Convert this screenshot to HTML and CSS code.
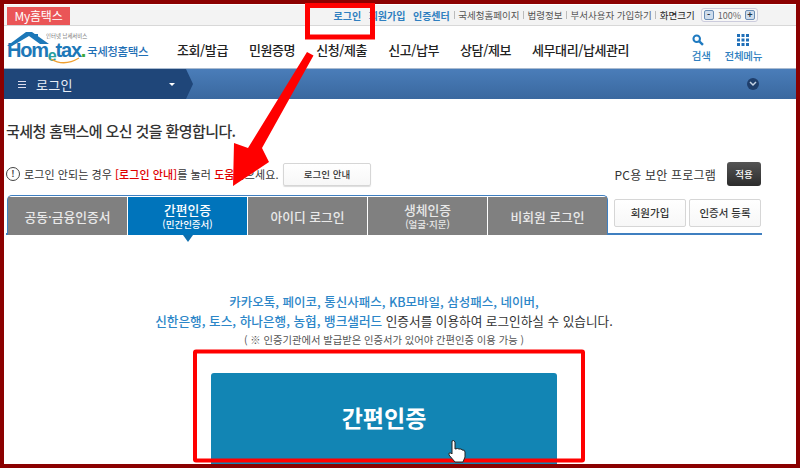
FILE: index.html
```html
<!DOCTYPE html>
<html lang="ko">
<head>
<meta charset="utf-8">
<title>국세청 홈택스</title>
<link rel="stylesheet" href="styles.css">
</head>
<body>
<div class="page">
  <div class="topbar">
    <span class="my">My홈택스</span>
    <div class="util">
      <a class="blue">로그인</a>
      <a class="blue">회원가입</a>
      <a class="blue last">인증센터</a>
      <i></i><a>국세청홈페이지</a>
      <i></i><a>법령정보</a>
      <i></i><a>부서사용자 가입하기</a>
      <i></i><a class="dark">화면크기</a>
      <span class="zoom"><b>-</b><em>100%</em><b>+</b></span>
    </div>
  </div>
  <header class="head">
    <div class="logo">
      <svg class="logo-house" width="44" height="16" viewBox="0 0 44 16"><path d="M0 15 L19 1 h6 L42 13 h-9 L22 5 L5 15 Z" fill="#1d78b8"/><rect x="27" y="3" width="4" height="5" fill="#1d78b8"/></svg>
      <span class="logo-sub">인터넷 납세서비스</span>
      <span class="logo-word">Hom<span class="logo-e">e</span>tax<span class="logo-dot">.</span></span>
      <svg class="logo-smile" width="30" height="8" viewBox="0 0 30 8"><path d="M1 2 Q14 10 29 1" stroke="#f0a030" stroke-width="1.3" fill="none"/></svg>
      <span class="logo-name">국세청홈택스</span>
    </div>
    <nav class="gnb">
      <a>조회/발급</a><a>민원증명</a><a>신청/제출</a><a>신고/납부</a><a>상담/제보</a><a>세무대리/납세관리</a>
    </nav>
    <div class="tools">
      <div class="tool tool-search">
        <svg class="search-ico" width="12" height="12" viewBox="0 0 14 14"><circle cx="5.5" cy="5.5" r="3.8" fill="none" stroke="#1f7ac0" stroke-width="2.4"/><path d="M8.5 8.5 L12.800 12.800" stroke="#1f7ac0" stroke-width="2.800"/></svg>
        <span>검색</span>
      </div>
      <div class="tool">
        <svg width="12" height="12" viewBox="0 0 12 12" fill="#1f6fb8"><rect width="3" height="3"/><rect x="4.5" width="3" height="3"/><rect x="9" width="3" height="3"/><rect y="4.5" width="3" height="3"/><rect x="4.5" y="4.5" width="3" height="3"/><rect x="9" y="4.5" width="3" height="3"/><rect y="9" width="3" height="3"/><rect x="4.5" y="9" width="3" height="3"/><rect x="9" y="9" width="3" height="3"/></svg>
        <span>전체메뉴</span>
      </div>
    </div>
  </header>
  <div class="crumb">
    <div class="crumb-cur">
      <span class="burger"></span>
      <span class="crumb-text">로그인</span>
      <span class="caret"></span>
    </div>
    <span class="crumb-arrow"></span>
    <span class="crumb-more"><svg width="8" height="6" viewBox="0 0 8 6"><path d="M1 1 L4 4 L7 1" fill="none" stroke="#c5d3e4" stroke-width="1.5"/></svg></span>
  </div>
  <main class="main">
    <h1 class="welcome">국세청 홈택스에 오신 것을 환영합니다.</h1>
    <div class="notice-row">
      <span class="info">!</span>
      <p class="notice">로그인 안되는 경우 <span class="red">[로그인 안내]</span>를 눌러 <span class="red">도움</span>받으세요.</p>
      <button class="btn guide">로그인 안내</button>
      <span class="pc">PC용 보안 프로그램</span>
      <button class="apply">적용</button>
    </div>
    <div class="tabrow">
      <div class="tabs">
        <div class="tab">공동·금융인증서</div>
        <div class="tab on">간편인증<small>(민간인증서)</small></div>
        <div class="tab">아이디 로그인</div>
        <div class="tab">생체인증<small>(얼굴·지문)</small></div>
        <div class="tab">비회원 로그인</div>
      </div>
      <div class="tab-btns">
        <button class="btn side">회원가입</button>
        <button class="btn side">인증서 등록</button>
      </div>
    </div>
    <div class="desc">
      <p class="line-b">카카오톡, 페이코, 통신사패스, KB모바일, 삼성패스, 네이버,</p>
      <p class="line-c"><span class="line-b">신한은행, 토스, 하나은행, 농협, 뱅크샐러드</span> 인증서를 이용하여 로그인하실 수 있습니다.</p>
      <p class="line-n">( ※ 인증기관에서 발급받은 인증서가 있어야 간편인증 이용 가능 )</p>
    </div>
    <div class="big">간편인증</div>
  </main>
</div>
<svg class="overlay" width="800" height="468" viewBox="0 0 800 468">
  <rect x="307.5" y="5.500" width="65" height="31.500" fill="none" stroke="#f00" stroke-width="5"/>
  <rect x="195" y="351.500" width="388" height="109" rx="1" fill="none" stroke="#f00" stroke-width="4"/>
  <path d="M307 52 L313.500 55.500 L262 148 L269 162 L233 186 L234 143 L248 148 Z" fill="#f00"/>
  <path d="M452 441 q2 -1.500 3 1 v7 q3 -1 4 0 q3 -.5 3 1 q3 -.500 3 2 v5 l-2 5 h-8 l-6 -7 q-1 -3 2 -2 l1 1 z" fill="#fff" stroke="#222" stroke-width="1"/>
</svg>
</body>
</html>
```
FILE: styles.css
```css
* { box-sizing: border-box; }
html, body { margin: 0; padding: 0; }
body {
  position: relative;
  width: 800px;
  height: 468px;
  overflow: hidden;
  background: #fff;
  font-family: "Noto Sans CJK KR", "Noto Sans", sans-serif;
  color: #333;
}
p, h1 { margin: 0; }
.page {
  width: 800px;
  height: 468px;
  border: solid #8b0000;
  border-width: 4px;
  overflow: hidden;
  background: #fff;
}
.overlay { position: absolute; left: 0; top: 0; pointer-events: none; }

.topbar {
  height: 21px;
  margin-top: 1px;
  background: #f3f3f3;
  border-bottom: 1px solid #d8d8d8;
  display: flex;
  justify-content: space-between;
  align-items: flex-end;
  padding: 0 0 0 3px;
}
.my {
  width: 63px;
  height: 18px;
  background: #ea5557;
  color: #fff;
  font-size: 12px;
  line-height: 18px;
  text-align: center;
  letter-spacing: -0.2px;
}
.util {
  display: flex;
  align-items: center;
  height: 20px;
  font-size: 9.500px;
  color: #555;
  padding-right: 38px;
  white-space: nowrap;
}
.util a { margin: 0 3.500px; }
.util .blue { color: #2f7fc0; font-weight: 700; font-size: 10px; margin: 0 7.500px 0 0; }
.util .blue.last { margin-right: 4px; }
.util .dark { color: #222; margin-right: 3px; }
.util i { width: 1px; height: 8px; background: #bbb; }
.zoom {
  display: flex;
  align-items: center;
  gap: 4px;
  height: 14px;
  margin-left: 3px;
  padding: 0 2px;
  border: 1px solid #ccd;
  border-radius: 3px;
  background: #f7f7f7;
}
.zoom b {
  width: 10px;
  height: 10px;
  background: #cfdcec;
  border: 1px solid #6a8db5;
  border-radius: 2px;
  font-size: 9px;
  line-height: 7px;
  text-align: center;
  color: #234;
}
.zoom em { font-style: normal; color: #666; font-size: 9px; }

.head {
  height: 42px;
  display: flex;
  align-items: center;
  background: #fff;
}
.logo {
  position: relative;
  width: 169px;
  height: 42px;
  flex: none;
}
.logo-house { position: absolute; left: 3px; top: 5px; }
.logo-sub { position: absolute; left: 42px; top: 5px; font-size: 6px; color: #777; white-space: nowrap; transform: scale(.9); transform-origin: left; }
.logo-word { position: absolute; left: 3px; top: 12px; font: 700 20px/24px "Liberation Sans", sans-serif; color: #1d78b8; letter-spacing: -1.2px; }
.logo-e { color: #26a0a0; font-size: 16px; position: relative; top: 4px; }
.logo-dot { color: #3aa63a; }
.logo-smile { position: absolute; left: 46px; top: 31px; }
.logo-name { position: absolute; left: 83px; top: 16px; font-size: 11.500px; line-height: 18px; color: #1f6fb5; font-weight: 500; letter-spacing: -0.4px; white-space: nowrap; }

.gnb {
  display: flex;
  gap: 21px;
  font-size: 13px;
  color: #222;
  font-weight: 500;
  white-space: nowrap;
  margin-left: 4px;
  letter-spacing: -0.4px;
  padding-top: 4px;
}
.tools {
  display: flex;
  gap: 14px;
  margin-left: auto;
  margin-right: 34px;
  padding-top: 2px;
}
.tool {
  display: flex;
  flex-direction: column;
  align-items: center;
  gap: 3px;
  font-size: 10.500px;
  line-height: 14px;
  color: #2f7fc0;
  font-weight: 500;
  letter-spacing: -0.3px;
}
.search-ico { align-self: flex-start; }

.crumb {
  height: 31px;
  display: flex;
  align-items: center;
  position: relative;
  background: linear-gradient(#4a7db9, #3a689f);
  border-top: 1px solid #aabbd0;
}
.crumb-cur {
  width: 182px;
  height: 100%;
  background: #1f4679;
  display: flex;
  align-items: center;
  padding-left: 14px;
  color: #e8eef6;
  font-size: 13px;
}
.burger {
  width: 8px;
  height: 7px;
  border-top: 1px solid #dde;
  border-bottom: 1px solid #dde;
  background: linear-gradient(#dde, #dde) center / 100% 1px no-repeat;
}
.crumb-text { margin-left: 10px; letter-spacing: .3px; }
.caret {
  margin-left: 96px;
  border: 3px solid transparent;
  border-top: 3px solid #fff;
  margin-top: 3px;
}
.crumb-arrow {
  width: 0;
  height: 0;
  border-top: 15px solid transparent;
  border-bottom: 15px solid transparent;
  border-left: 7px solid #1f4679;
}
.crumb-more {
  margin-left: auto;
  margin-right: 37px;
  width: 12px;
  height: 12px;
  border-radius: 50%;
  background: #1f3f6c;
  display: flex;
  align-items: center;
  justify-content: center;
}

.main { padding: 0 0 0 2px; }
.welcome {
  font-size: 15px;
  font-weight: 500;
  line-height: 22px;
  color: #333;
  margin-top: 21px;
  letter-spacing: -0.6px;
  white-space: nowrap;
}
.notice-row {
  display: flex;
  align-items: center;
  height: 24px;
  margin-top: 20px;
  position: relative;
}
.info {
  width: 14px;
  height: 14px;
  border: 1.500px solid #444;
  border-radius: 50%;
  font-size: 9px;
  font-weight: 700;
  line-height: 11px;
  text-align: center;
  color: #444;
  flex: none;
}
.notice {
  margin-left: 4px;
  font-size: 11px;
  color: #333;
  white-space: nowrap;
  width: 255px;
  flex: none;
  letter-spacing: 0.08px;
}
.red { color: #e00000; font-weight: 500; }
.btn {
  background: linear-gradient(#fff, #f7f7f7);
  border: 1px solid #d6d6d6;
  border-radius: 2px;
  color: #333;
  font: 500 9.500px/14px "Noto Sans CJK KR", sans-serif;
  padding: 0;
}
.guide { width: 88px; height: 23px; margin-left: 4px; box-shadow: 0 1px 1px #ddd; }
.pc { margin-left: auto; margin-right: 11px; font-size: 12px; color: #333; letter-spacing: 0.2px; }
.apply {
  width: 34px;
  height: 24px;
  margin-right: 35px;
  background: linear-gradient(#555, #2c2c2c);
  color: #fff;
  border: 0;
  border-radius: 3px;
  font: 500 9.500px/14px "Noto Sans CJK KR", sans-serif;
  padding: 0;
}
.tabrow {
  margin-top: 9px;
  width: 756px;
  height: 40px;
  display: flex;
  align-items: flex-start;
  border-bottom: 2px solid #3f7fc0;
}
.tabs {
  display: flex;
  width: 601px;
  height: 40px;
  margin-left: 1px;
  padding-top: 1px;
  background: #fff;
  border: solid #3f7fc0;
  border-width: 1px 1px 0 1px;
  border-radius: 5px 5px 0 0;
  gap: 1px;
  position: relative;
}
.tab {
  flex: 1;
  height: 38px;
  background: #808080;
  color: #e9e9e9;
  font-size: 12.800px;
  font-weight: 500;
  display: flex;
  flex-direction: column;
  justify-content: center;
  align-items: center;
  line-height: 15px;
  position: relative;
  white-space: nowrap;
}
.tab small { font-size: 9.500px; line-height: 14px; }
.tab.on { background: #0074bb; color: #fff; }
.tab.on::after {
  content: "";
  position: absolute;
  left: 50%;
  margin-left: -5px;
  top: 38px;
  border: 5px solid transparent;
  border-top: 7px solid #0d6fae;
  border-bottom: 0;
}
.tab-btns { display: flex; gap: 3px; margin: 4px 0 0 6px; }
.btn.side { width: 72px; height: 28px; font-size: 10.500px; }
.desc {
  margin-top: 57px;
  width: 756px;
  text-align: center;
  font-size: 12.500px;
  line-height: 19px;
  white-space: nowrap;
  color: #333;
}
.line-c { font-size: 12.650px; }
.line-b { color: #2c86c8; font-weight: 500; }
.line-n { font-size: 10.300px; color: #555; }
.big {
  width: 346px;
  height: 110px;
  margin: 24px 0 0 205px;
  background: #1285b4;
  border-radius: 3px;
  color: #fff;
  font-size: 23px;
  font-weight: 700;
  text-align: center;
  padding-top: 26px;
  line-height: 36px;
}
```
